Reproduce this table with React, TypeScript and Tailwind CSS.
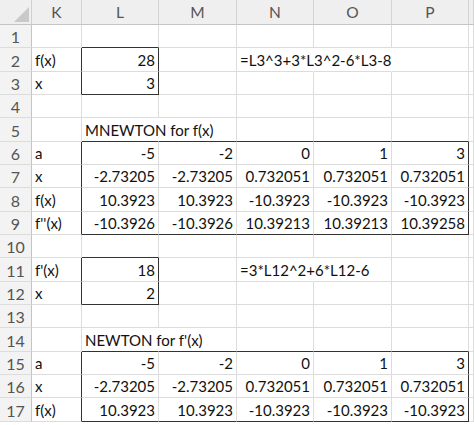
const COLS = ["K", "L", "M", "N", "O", "P", ""];

// sheet contents for columns K..P, rows 1..17
const DATA: string[][] = [
  ["", "", "", "", "", ""],
  ["f(x)", "28", "", "=L3^3+3*L3^2-6*L3-8", "", ""],
  ["x", "3", "", "", "", ""],
  ["", "", "", "", "", ""],
  ["", "MNEWTON for f(x)", "", "", "", ""],
  ["a", "-5", "-2", "0", "1", "3"],
  ["x", "-2.73205", "-2.73205", "0.732051", "0.732051", "0.732051"],
  ["f(x)", "10.3923", "10.3923", "-10.3923", "-10.3923", "-10.3923"],
  ["f''(x)", "-10.3926", "-10.3926", "10.39213", "10.39213", "10.39258"],
  ["", "", "", "", "", ""],
  ["f'(x)", "18", "", "=3*L12^2+6*L12-6", "", ""],
  ["x", "2", "", "", "", ""],
  ["", "", "", "", "", ""],
  ["", "NEWTON for f'(x)", "", "", "", ""],
  ["a", "-5", "-2", "0", "1", "3"],
  ["x", "-2.73205", "-2.73205", "0.732051", "0.732051", "0.732051"],
  ["f(x)", "10.3923", "10.3923", "-10.3923", "-10.3923", "-10.3923"],
];

// outlined ranges (rows 1-based, cols 0 = K)
const BOXES = [
  { r1: 2, r2: 3, c1: 1, c2: 1 },
  { r1: 6, r2: 9, c1: 1, c2: 5 },
  { r1: 11, r2: 12, c1: 1, c2: 1 },
  { r1: 15, r2: 17, c1: 1, c2: 5 },
];

// cells whose right gridline is covered by overflowing text
const SPILL = new Set(["2-3", "2-4", "5-1", "11-3", "14-1"]);

const isNumber = (v: string) => /^-?\d/.test(v);

function darkBottom(r: number, c: number) {
  return BOXES.some((b) => c >= b.c1 && c <= b.c2 && (r === b.r2 || r === b.r1 - 1));
}

function darkRight(r: number, c: number) {
  return BOXES.some((b) => r >= b.r1 && r <= b.r2 && (c === b.c2 || c === b.c1 - 1));
}

function Cell({ r, c }: { r: number; c: number }) {
  const value = c < 6 ? DATA[r - 1][c] : "";
  const bottom = darkBottom(r, c) ? "border-b-[1.5px] border-b-[#333]" : "border-b border-b-[#dcdcdc]";
  let right = "border-r border-r-[#dcdcdc]";
  if (darkRight(r, c)) right = "border-r-[1.5px] border-r-[#333]";
  else if (SPILL.has(`${r}-${c}`)) right = "border-r border-r-transparent";
  const align = isNumber(value) ? "justify-end pr-[3px]" : "justify-start pl-[3px]";

  return (
    <div className={`relative flex items-end bg-white ${bottom} ${right} ${align}`}>
      {value && (
        <span className="relative z-10 whitespace-nowrap pb-[2px] text-[15px] leading-[18px] text-[#111]">
          {value}
        </span>
      )}
    </div>
  );
}

export default function App() {
  const rows = Array.from({ length: 17 }, (_, i) => i + 1);

  return (
    <div className="h-[425px] w-[474px] overflow-hidden bg-white font-['Lato','Liberation_Sans',sans-serif]">
      <div className="grid grid-cols-[32px_50px_77px_78px_77px_78px_77px_1fr] grid-rows-[25px_23px_24px_23px_23px_24px_23px_23px_24px_23px_23px_24px_23px_23px_24px_23px_23px_24px]">
        {/* corner */}
        <div className="flex items-end justify-end border-b border-r border-b-[#c4c4c4] border-r-[#d0d0d0] bg-[#efefef] pb-[2px] pr-[2px]">
          <svg width="15" height="15" viewBox="0 0 15 15">
            <polygon points="15,0 15,15 0,15" fill="#c9c9c9" />
          </svg>
        </div>
        {COLS.map((col, i) => (
          <div
            key={i}
            className="flex items-center justify-center border-b border-r border-b-[#c4c4c4] border-r-[#d4d4d4] bg-[#efefef] pt-[2px] text-[15.5px] text-[#555]"
          >
            {col}
          </div>
        ))}

        {rows.map((r) => (
          <div key={r} className="contents">
            <div className="flex items-center justify-center border-b border-r border-b-[#dcdcdc] border-r-[#c4c4c4] bg-[#f3f3f3] pt-[2px] text-[16px] text-[#555]">
              {r}
            </div>
            {COLS.map((_, c) => (
              <Cell key={c} r={r} c={c} />
            ))}
          </div>
        ))}
      </div>
    </div>
  );
}
